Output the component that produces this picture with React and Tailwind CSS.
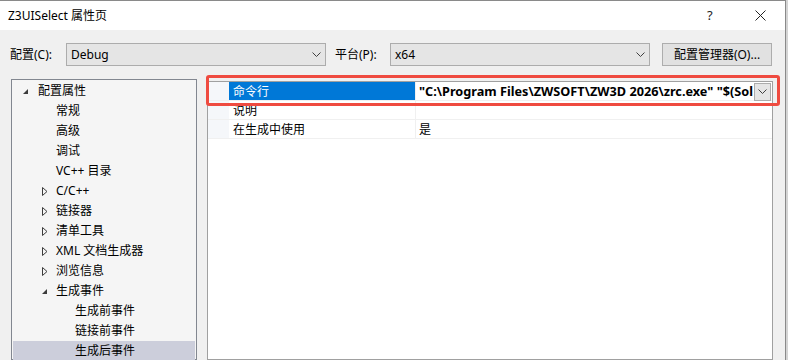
import React from "react";

const font = "font-['Noto_Sans','Noto_Sans_CJK_SC',sans-serif]";

function Chevron({ className = "" }) {
  return (
    <svg width="9" height="5" viewBox="0 0 9 5" className={className}>
      <polyline points="0.5,0.5 4.5,4.5 8.5,0.5" fill="none" stroke="#404040" strokeWidth="1" />
    </svg>
  );
}

function Combo({ value, width }) {
  return (
    <div className={`${width} h-[23px] flex items-center justify-between border border-[#acacac] bg-[#e5e5e5] pl-[4px] pr-[4px]`}>
      <span className="text-[12px] text-black">{value}</span>
      <Chevron />
    </div>
  );
}

// expand / collapse glyphs of the tree
function Expanded() {
  return (
    <svg width="5" height="5" viewBox="0 0 5 5">
      <polygon points="5,0 5,5 0,5" fill="#3c3c3c" />
    </svg>
  );
}

function Collapsed() {
  return (
    <svg width="6" height="9" viewBox="0 0 6 9">
      <polygon points="0.5,0.5 5,4.5 0.5,8.5" fill="none" stroke="#3c3c3c" strokeWidth="1" />
    </svg>
  );
}

const tree = [
  { label: "配置属性", level: 0, icon: "open" },
  { label: "常规", level: 1 },
  { label: "高级", level: 1 },
  { label: "调试", level: 1 },
  { label: "VC++ 目录", level: 1 },
  { label: "C/C++", level: 1, icon: "closed" },
  { label: "链接器", level: 1, icon: "closed" },
  { label: "清单工具", level: 1, icon: "closed" },
  { label: "XML 文档生成器", level: 1, icon: "closed" },
  { label: "浏览信息", level: 1, icon: "closed" },
  { label: "生成事件", level: 1, icon: "open" },
  { label: "生成前事件", level: 2 },
  { label: "链接前事件", level: 2 },
  { label: "生成后事件", level: 2, selected: true },
];

const indents = ["pl-[25px]", "pl-[43px]", "pl-[62px]"];
const iconPos = ["left-[10px]", "left-[29px]", "left-[48px]"];

const rows = [
  { name: "命令行", value: '"C:\\Program Files\\ZWSOFT\\ZW3D 2026\\zrc.exe" "$(Sol', sel: true },
  { name: "说明", value: "" },
  { name: "在生成中使用", value: "是" },
];

export default function App() {
  return (
    <div className={`w-[788px] h-[360px] overflow-hidden bg-[#d4d4d4] ${font} text-black`}>
      <div className="relative w-[786px] h-[360px] flex flex-col border-t border-r border-[#8a8a8a] bg-[#f0f0f0]">
        {/* Title bar */}
        <div className="h-[29px] bg-white flex items-center pl-[8px]">
          <span className="text-[12px] flex-1">Z3UISelect 属性页</span>
          <span className="text-[13px] w-[10px] mr-[38px] text-[#222]">?</span>
          <svg width="11" height="11" viewBox="0 0 11 11" className="mr-[19px]">
            <path d="M0.5 0.5 L10.5 10.5 M10.5 0.5 L0.5 10.5" stroke="#222" strokeWidth="1" />
          </svg>
        </div>

        {/* Configuration row */}
        <div className="mt-[13px] flex items-center pl-[10px] text-[12px]">
          <span className="w-[56px]">配置(C):</span>
          <Combo value="Debug" width="w-[260px]" />
          <span className="ml-[9px] w-[55px]">平台(P):</span>
          <Combo value="x64" width="w-[260px]" />
          <div className="ml-[12px] w-[110px] h-[23px] flex items-center justify-center border border-[#adadad] bg-[#e1e1e1]">
            配置管理器(O)...
          </div>
        </div>

        {/* Main area */}
        <div className="mt-[13px] flex flex-1 min-h-0">
          {/* Tree */}
          <div className="ml-[11px] w-[186px] border border-[#828790] bg-[#f5f5f5] pt-[1px]">
            {tree.map((t) => (
              <div
                key={t.label}
                className={`relative mx-[1px] h-[20px] flex items-center text-[12px] ${indents[t.level]} ${
                  t.selected ? "bg-[#cccedb]" : ""
                }`}
              >
                {t.icon && (
                  <span className={`absolute ${iconPos[t.level]} top-0 h-[20px] flex items-center`}>
                    {t.icon === "open" ? <Expanded /> : <Collapsed />}
                  </span>
                )}
                {t.label}
              </div>
            ))}
          </div>

          {/* Property grid */}
          <div className="ml-[10px] mt-[2px] w-[566px] border border-[#a0a0a0] bg-white text-[12px]">
            {rows.map((r) => (
              <div key={r.name} className="flex h-[19px] border-b border-[#f0f0f0]">
                <div className="w-[21px] bg-[#f5f7fa]" />
                <div
                  className={`w-[187px] pl-[4px] pt-[1px] flex items-center border-r border-[#f0f0f0] ${
                    r.sel ? "bg-[#0078d7] text-white" : ""
                  }`}
                >
                  {r.name}
                </div>
                <div className="flex-1 min-w-0 flex items-center pl-[3px] pt-[1px]">
                  <span className={`flex-1 whitespace-nowrap ${r.sel ? "font-bold text-[12.7px]" : ""}`}>{r.value}</span>
                  {r.sel && (
                    <div className="w-[17px] h-[18px] mr-[1px] flex items-center justify-center border border-[#acacac] bg-[#e5e5e5]">
                      <Chevron />
                    </div>
                  )}
                </div>
              </div>
            ))}
          </div>
        </div>

        {/* Red highlight annotation over the command line row */}
        <div className="absolute left-[206px] top-[74px] w-[574px] h-[31px] border-[3px] border-[#ef4b40] rounded-[3px]" />
      </div>
    </div>
  );
}
